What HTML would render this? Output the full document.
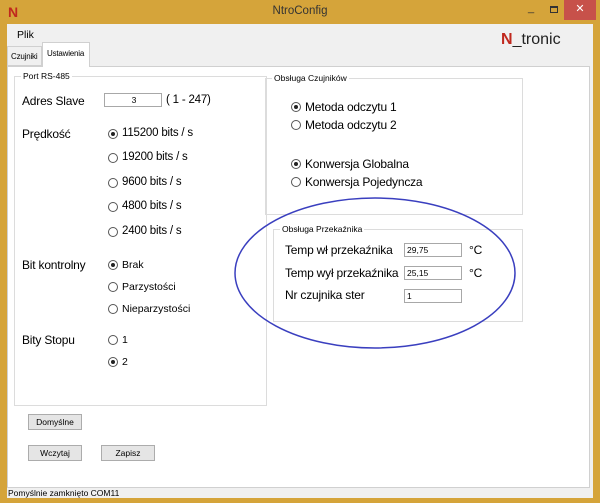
<!DOCTYPE html><html><head><meta charset="utf-8"><style>
*{margin:0;padding:0;box-sizing:border-box}
body{width:600px;height:503px;overflow:hidden;background:#d5a43a;font-family:"Liberation Sans",sans-serif;position:relative;color:#000}
.a{position:absolute;white-space:nowrap}
.s{font-size:8.5px}.m{font-size:10.5px}.l{font-size:12px;letter-spacing:-0.2px}.k{font-size:11.5px;letter-spacing:-0.2px}
.gb{position:absolute;border:1px solid #dcdcdc}
.gl{position:absolute;top:-6px;left:6px;background:#fff;padding:0 2px;font-size:8.5px}
.r{position:absolute;width:10px;height:10px;border:1px solid #555;border-radius:50%;background:#fff}
.r.on::after{content:"";position:absolute;left:2px;top:2px;width:4px;height:4px;border-radius:50%;background:#222}
.tb{position:absolute;border:1px solid #a8a8a8;background:#fff;font-size:8.5px;height:14px;line-height:12px;padding-left:2px}
.bt{position:absolute;border:1px solid #acacac;background:#e5e5e5;font-size:8.5px;text-align:center;height:16px;line-height:14px}
</style></head><body>
<div class="a" style="left:8px;top:4px;color:#c0281e;font-weight:bold;font-size:14px">N</div>
<div class="a" style="left:0;width:600px;top:5px;text-align:center;font-size:11.5px;color:#333">NtroConfig</div>
<div class="a" style="left:528px;top:2px;font-size:11px;color:#333">_</div>
<div class="a" style="left:550px;top:6px;width:8px;height:7px;border:1px solid #333;border-top-width:2px"></div>
<div class="a" style="left:564px;top:0;width:32px;height:20px;background:#c7514a;color:#fff;text-align:center;font-size:11px;line-height:19px">✕</div>
<div class="a" style="left:7px;top:24px;width:586px;height:472px;background:#f0f0f0"></div>
<div class="a m" style="left:17px;top:29px">Plik</div>
<div class="a" style="left:501px;top:31px;font-size:16px;color:#222"><span style="color:#c0281e;font-weight:bold">N</span>_tronic</div>
<div class="a" style="left:7px;top:66px;width:583px;height:422px;background:#fff;border:1px solid #d0d0d0"></div>
<div class="a" style="left:7px;top:46px;width:35px;height:20px;border:1px solid #d0d0d0;background:#f0f0f0;padding:5px 0 0 3px;font-size:8px;letter-spacing:-0.2px">Czujniki</div>
<div class="a" style="left:42px;top:42px;width:48px;height:25px;border:1px solid #d0d0d0;border-bottom:none;background:#fff;padding:6px 0 0 4px;font-size:8px;letter-spacing:-0.2px">Ustawienia</div>

<div class="gb" style="left:14px;top:76px;width:253px;height:330px"><div class="gl">Port RS-485</div></div>
<div class="a l" style="left:22px;top:94px">Adres Slave</div>
<div class="tb" style="left:104px;top:93px;width:58px;text-align:center">3</div>
<div class="a k" style="left:166px;top:94px">( 1 - 247)</div>
<div class="a l" style="left:22px;top:127px">Prędkość</div>
<div class="r on" style="left:108px;top:129px"></div><div class="a k" style="left:122px;top:127px">115200 bits / s</div>
<div class="r" style="left:108px;top:153px"></div><div class="a k" style="left:122px;top:151px">19200 bits / s</div>
<div class="r" style="left:108px;top:178px"></div><div class="a k" style="left:122px;top:176px">9600 bits / s</div>
<div class="r" style="left:108px;top:202px"></div><div class="a k" style="left:122px;top:200px">4800 bits / s</div>
<div class="r" style="left:108px;top:227px"></div><div class="a k" style="left:122px;top:225px">2400 bits / s</div>
<div class="a l" style="left:22px;top:258px">Bit kontrolny</div>
<div class="r on" style="left:108px;top:260px"></div><div class="a m" style="left:122px;top:259px">Brak</div>
<div class="r" style="left:108px;top:282px"></div><div class="a m" style="left:122px;top:281px">Parzystości</div>
<div class="r" style="left:108px;top:304px"></div><div class="a m" style="left:122px;top:303px">Nieparzystości</div>
<div class="a l" style="left:22px;top:333px">Bity Stopu</div>
<div class="r" style="left:108px;top:335px"></div><div class="a m" style="left:122px;top:334px">1</div>
<div class="r on" style="left:108px;top:357px"></div><div class="a m" style="left:122px;top:356px">2</div>

<div class="gb" style="left:265px;top:78px;width:258px;height:137px"><div class="gl">Obsługa Czujników</div></div>
<div class="r on" style="left:291px;top:102px"></div><div class="a l" style="left:305px;top:100px">Metoda odczytu 1</div>
<div class="r" style="left:291px;top:120px"></div><div class="a l" style="left:305px;top:118px">Metoda odczytu 2</div>
<div class="r on" style="left:291px;top:159px"></div><div class="a l" style="left:305px;top:157px">Konwersja Globalna</div>
<div class="r" style="left:291px;top:177px"></div><div class="a l" style="left:305px;top:175px">Konwersja Pojedyncza</div>

<div class="gb" style="left:273px;top:229px;width:250px;height:93px"><div class="gl">Obsługa Przekaźnika</div></div>
<div class="a l" style="left:285px;top:243px">Temp wł przekaźnika</div>
<div class="tb" style="left:404px;top:243px;width:58px">29,75</div><div class="a l" style="left:469px;top:243px">°C</div>
<div class="a l" style="left:285px;top:266px">Temp wył przekaźnika</div>
<div class="tb" style="left:404px;top:266px;width:58px">25,15</div><div class="a l" style="left:469px;top:266px">°C</div>
<div class="a l" style="left:285px;top:288px">Nr czujnika ster</div>
<div class="tb" style="left:404px;top:289px;width:58px">1</div>

<div class="bt" style="left:28px;top:414px;width:54px">Domyślne</div>
<div class="bt" style="left:28px;top:445px;width:54px">Wczytaj</div>
<div class="bt" style="left:101px;top:445px;width:54px">Zapisz</div>
<div class="a" style="left:7px;top:488px;width:586px;height:10px;background:#f0f0f0"></div>
<div class="a s" style="left:8px;top:488px">Pomyślnie zamknięto COM11</div>
<svg class="a" style="left:0;top:0" width="600" height="503"><ellipse cx="375" cy="273" rx="140" ry="75" fill="none" stroke="#3a3fbf" stroke-width="1.5"/></svg>
</body></html>
